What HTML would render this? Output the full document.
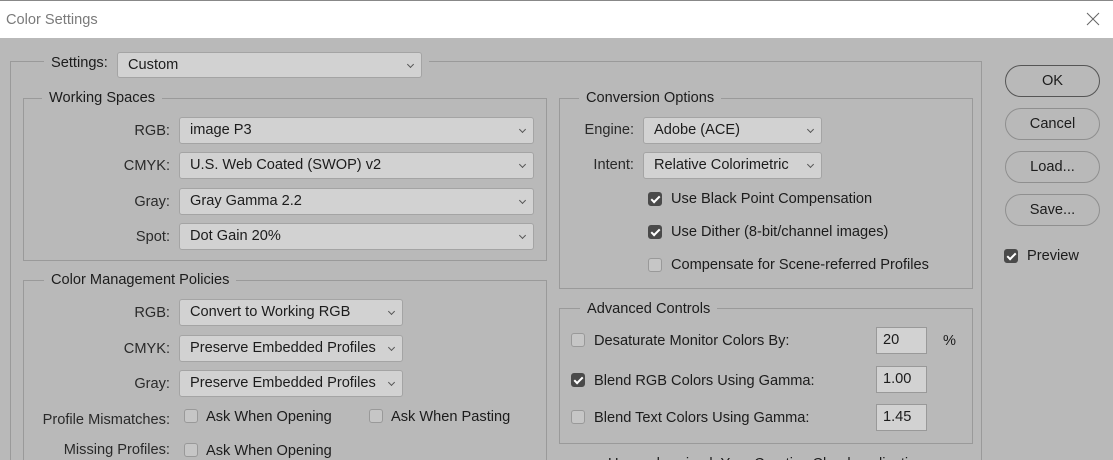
<!DOCTYPE html>
<html><head><meta charset="utf-8"><style>
*{box-sizing:border-box;margin:0;padding:0}
html,body{width:1113px;height:460px;overflow:hidden}
body{background:#b9b9b9;font-family:"Liberation Sans",sans-serif;font-size:14.6px;color:#1c1c1c;position:relative}
.a{position:absolute}
.t{position:absolute;white-space:nowrap;line-height:18px}
.lbl{position:absolute;white-space:nowrap;line-height:18px;text-align:right;color:#2a2a2a}
.box{position:absolute;border:1px solid #9a9a9a}
.bt{position:absolute;background:#b9b9b9;padding:0 7px;line-height:18px;white-space:nowrap}
.dd{position:absolute;background:#d2d2d2;border:1px solid #a4a4a4;border-radius:3px;padding-left:10px;line-height:25px;white-space:nowrap}
.dd::after{content:"";position:absolute;right:8px;top:9px;width:4px;height:4px;border-right:1px solid #555;border-bottom:1px solid #555;transform:rotate(45deg)}
.cb{position:absolute;width:14px;height:14px;border:1px solid #999;border-radius:3px;background:#c6c6c6}
.cb.on{background:#4a4a4a;border-color:#4a4a4a}
.cb.on::after{content:"";position:absolute;left:4px;top:1px;width:3px;height:7px;border-right:2px solid #fff;border-bottom:2px solid #fff;transform:rotate(45deg)}
.in{position:absolute;width:51px;height:27px;background:#d2d2d2;border:1px solid #999;padding-left:6px;line-height:25px}
.btn{position:absolute;left:1005px;width:95px;height:32px;border:1px solid #8f8f8f;border-radius:16px;text-align:center;line-height:30px}
</style></head><body>
<div class="a" style="left:0;top:0;width:1113px;height:38px;background:#fff;border-top:1px solid #888"></div>
<div class="t" style="left:6px;top:11px;color:#7a7a7a">Color Settings</div>
<svg class="a" style="left:1086px;top:12px" width="14" height="14"><path d="M1 1L13 13M13 1L1 13" stroke="#666" stroke-width="1"/></svg>

<div class="a" style="left:10px;top:61px;width:972px;height:420px;border:1px solid #9a9a9a;border-bottom:none"></div>
<div class="a" style="left:44px;top:50px;width:385px;height:24px;background:#b9b9b9"></div>
<div class="t" style="left:51px;top:54px">Settings:</div>
<div class="dd" style="left:117px;top:52px;width:305px;height:26px">Custom</div>

<div class="box" style="left:23px;top:98px;width:524px;height:163px"></div>
<div class="bt" style="left:42px;top:89px">Working Spaces</div>
<div class="lbl" style="left:100px;width:70px;top:122px">RGB:</div>
<div class="dd" style="left:179px;top:117px;width:355px;height:27px">image P3</div>
<div class="lbl" style="left:100px;width:70px;top:157px">CMYK:</div>
<div class="dd" style="left:179px;top:152px;width:355px;height:27px">U.S. Web Coated (SWOP) v2</div>
<div class="lbl" style="left:100px;width:70px;top:193px">Gray:</div>
<div class="dd" style="left:179px;top:188px;width:355px;height:27px">Gray Gamma 2.2</div>
<div class="lbl" style="left:100px;width:70px;top:228px">Spot:</div>
<div class="dd" style="left:179px;top:223px;width:355px;height:27px">Dot Gain 20%</div>

<div class="box" style="left:23px;top:280px;width:524px;height:200px"></div>
<div class="bt" style="left:44px;top:271px">Color Management Policies</div>
<div class="lbl" style="left:100px;width:70px;top:304px">RGB:</div>
<div class="dd" style="left:179px;top:299px;width:224px;height:27px">Convert to Working RGB</div>
<div class="lbl" style="left:100px;width:70px;top:340px">CMYK:</div>
<div class="dd" style="left:179px;top:335px;width:224px;height:27px">Preserve Embedded Profiles</div>
<div class="lbl" style="left:100px;width:70px;top:375px">Gray:</div>
<div class="dd" style="left:179px;top:370px;width:224px;height:27px">Preserve Embedded Profiles</div>
<div class="lbl" style="left:20px;width:150px;top:411px">Profile Mismatches:</div>
<div class="cb" style="left:184px;top:409px"></div><div class="t" style="left:206px;top:408px">Ask When Opening</div>
<div class="cb" style="left:369px;top:409px"></div><div class="t" style="left:391px;top:408px">Ask When Pasting</div>
<div class="lbl" style="left:20px;width:150px;top:441px">Missing Profiles:</div>
<div class="cb" style="left:184px;top:443px"></div><div class="t" style="left:206px;top:442px">Ask When Opening</div>

<div class="box" style="left:559px;top:98px;width:414px;height:191px"></div>
<div class="bt" style="left:579px;top:89px">Conversion Options</div>
<div class="lbl" style="left:570px;width:64px;top:121px">Engine:</div>
<div class="dd" style="left:643px;top:117px;width:179px;height:27px">Adobe (ACE)</div>
<div class="lbl" style="left:570px;width:64px;top:156px">Intent:</div>
<div class="dd" style="left:643px;top:152px;width:179px;height:27px">Relative Colorimetric</div>
<div class="cb on" style="left:648px;top:192px"></div><div class="t" style="left:671px;top:190px">Use Black Point Compensation</div>
<div class="cb on" style="left:648px;top:225px"></div><div class="t" style="left:671px;top:223px">Use Dither (8-bit/channel images)</div>
<div class="cb" style="left:648px;top:258px"></div><div class="t" style="left:671px;top:256px">Compensate for Scene-referred Profiles</div>

<div class="box" style="left:559px;top:308px;width:414px;height:136px"></div>
<div class="bt" style="left:580px;top:300px">Advanced Controls</div>
<div class="cb" style="left:571px;top:333px"></div><div class="t" style="left:594px;top:332px">Desaturate Monitor Colors By:</div>
<div class="in" style="left:876px;top:327px">20</div><div class="t" style="left:943px;top:332px">%</div>
<div class="cb on" style="left:571px;top:373px"></div><div class="t" style="left:594px;top:372px">Blend RGB Colors Using Gamma:</div>
<div class="in" style="left:876px;top:366px">1.00</div>
<div class="cb" style="left:571px;top:410px"></div><div class="t" style="left:594px;top:409px">Blend Text Colors Using Gamma:</div>
<div class="in" style="left:876px;top:404px">1.45</div>
<div class="t" style="left:608px;top:455px">Unsynchronized: Your Creative Cloud applications</div>

<div class="btn" style="top:65px;border-color:#555">OK</div>
<div class="btn" style="top:108px">Cancel</div>
<div class="btn" style="top:151px">Load...</div>
<div class="btn" style="top:194px">Save...</div>
<div class="cb on" style="left:1004px;top:249px"></div><div class="t" style="left:1027px;top:247px">Preview</div>
</body></html>
